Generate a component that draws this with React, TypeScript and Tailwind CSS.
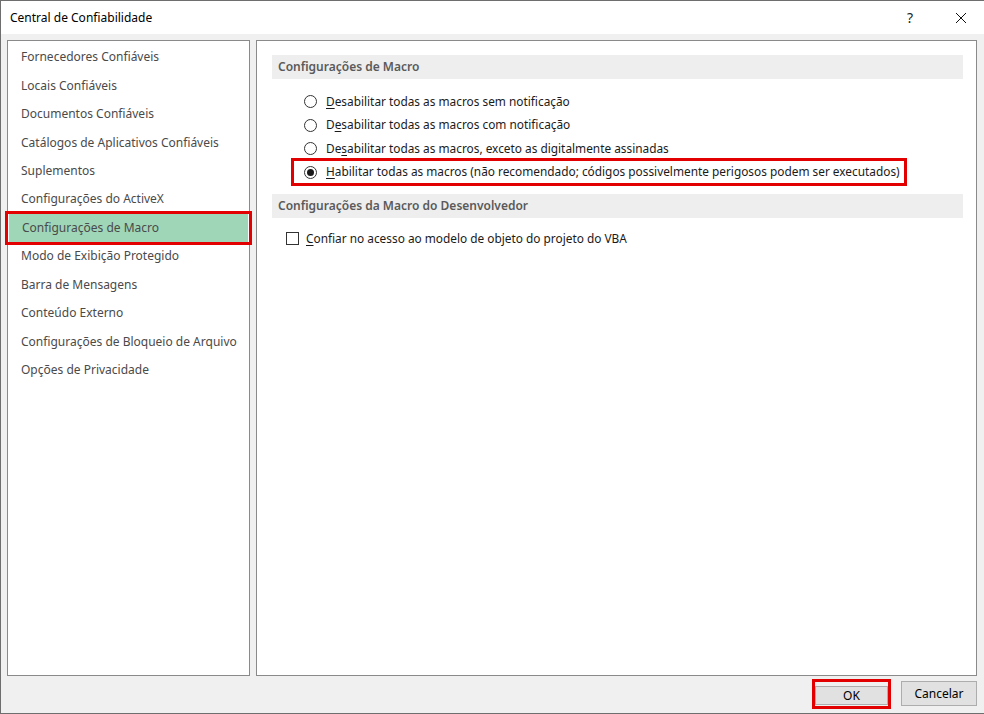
import React from "react";

const FONT = { fontFamily: '"Noto Sans", "Open Sans", sans-serif' };

const leftItems = [
  "Fornecedores Confiáveis",
  "Locais Confiáveis",
  "Documentos Confiáveis",
  "Catálogos de Aplicativos Confiáveis",
  "Suplementos",
  "Configurações do ActiveX",
  "Configurações de Macro",
  "Modo de Exibição Protegido",
  "Barra de Mensagens",
  "Conteúdo Externo",
  "Configurações de Bloqueio de Arquivo",
  "Opções de Privacidade",
];

// label split in [before, underlined letter, after]
const radios: [string, string, string][] = [
  ["", "D", "esabilitar todas as macros sem notificação"],
  ["D", "e", "sabilitar todas as macros com notificação"],
  ["De", "s", "abilitar todas as macros, exceto as digitalmente assinadas"],
  ["", "H", "abilitar todas as macros (não recomendado; códigos possivelmente perigosos podem ser executados)"],
];

function Radio({ checked }: { checked?: boolean }) {
  return (
    <span className="w-[13px] h-[13px] rounded-full border border-[#333] bg-white flex items-center justify-center shrink-0">
      {checked && <span className="w-[7px] h-[7px] rounded-full bg-[#1a1a1a]" />}
    </span>
  );
}

function SectionHeader({ children }: { children: React.ReactNode }) {
  return (
    <div className="h-[24px] bg-[#eeeeee] flex items-center pl-[6px] text-[12px] font-semibold text-[#5a5a5a]">
      {children}
    </div>
  );
}

export default function App() {
  return (
    <div style={FONT} className="w-[984px] h-[714px] bg-[#f0f0f0] border-l border-t border-b border-[#6e6e6e] flex flex-col overflow-hidden">
      {/* title bar */}
      <div className="h-[33px] bg-white flex items-center shrink-0">
        <span className="pl-[9px] text-[12px] text-black">Central de Confiabilidade</span>
        <span className="ml-auto mr-[42px] text-[14px] text-[#222]">?</span>
        <svg width="12" height="12" viewBox="0 0 12 12" className="mr-[17px]">
          <path d="M1 1 L11 11 M11 1 L1 11" stroke="#111" strokeWidth="1" />
        </svg>
      </div>

      <div className="flex gap-[6px] pl-[6px] pr-[7px] pt-[6px]">
        {/* left nav */}
        <div className="w-[243px] h-[636px] bg-white border border-[#8a8a8a] pt-[2px]">
          {leftItems.map((item) => {
            const sel = item === "Configurações de Macro";
            return (
              <div
                key={item}
                className={`relative h-[28.45px] flex items-center pl-[13px] text-[12px] text-[#4a4a4a] ${sel ? "bg-[#9fd6b8] mx-[1px] pl-[12px]" : ""}`}
              >
                {item}
                {sel && <span className="absolute -left-[4px] -right-[4px] -top-[3px] -bottom-[3px] border-[3px] border-[#e30000]" />}
              </div>
            );
          })}
        </div>

        {/* right content */}
        <div className="flex-1 h-[636px] bg-white border border-[#8a8a8a] pt-[14px] pl-[15px] pr-[13px]">
          <SectionHeader>Configurações de Macro</SectionHeader>
          <div className="flex flex-col pt-[11px] pl-[32px]">
            {radios.map(([a, u, b], i) => {
              const checked = i === 3;
              return (
                <div key={i} className="relative h-[23.5px] flex items-center gap-[5px] text-[11.85px] text-[#1a1a1a]">
                  <Radio checked={checked} />
                  <span className="pl-[4px]">
                    {a}
                    <span className="underline underline-offset-2">{u}</span>
                    {b}
                  </span>
                  {checked && <span className="absolute -left-[13px] w-[616px] -top-[3px] -bottom-[2px] border-[3px] border-[#e30000]" />}
                </div>
              );
            })}
          </div>
          <div className="pt-[10px]">
            <SectionHeader>Configurações da Macro do Desenvolvedor</SectionHeader>
          </div>
          <div className="flex items-center gap-[7px] pl-[14px] pt-[12px] text-[11.85px] text-[#1a1a1a]">
            <span className="w-[13px] h-[13px] border border-[#333] bg-white shrink-0" />
            <span>
              <span className="underline underline-offset-2">C</span>onfiar no acesso ao modelo de objeto do projeto do VBA
            </span>
          </div>
        </div>
      </div>

      {/* footer */}
      <div className="flex justify-end items-center gap-[13px] pr-[7px] pt-[5px]">
        <div className="relative">
          <button className="w-[73px] h-[19px] bg-[#e1e1e1] border border-[#adadad] text-[12px] text-black leading-none">OK</button>
          <span className="absolute -left-[3px] -right-[3px] -top-[3px] -bottom-[3px] border-[3px] border-[#e30000]" />
        </div>
        <button className="w-[76px] h-[25px] bg-[#e1e1e1] border border-[#adadad] text-[12px] text-black">Cancelar</button>
      </div>
    </div>
  );
}
